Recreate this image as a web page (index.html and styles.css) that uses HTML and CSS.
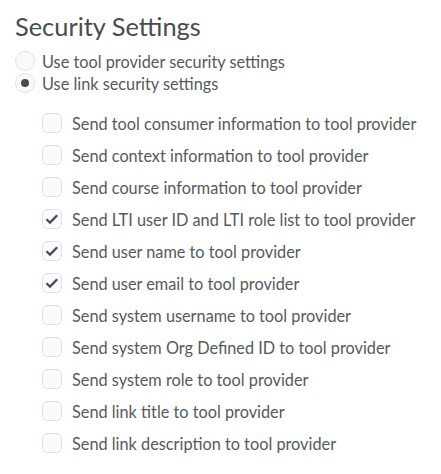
FILE: index.html
```html
<!DOCTYPE html>
<html lang="en">
<head>
    <meta charset="UTF-8">
    <meta name="viewport" content="width=device-width, initial-scale=1.0">
    <title>Security Settings</title>
    <link rel="stylesheet" href="styles.css">
</head>
<body>

    <section class="settings">
        <h2 class="title">Security Settings</h2>

        <div class="radio-group">
            <label class="radio-row"><span class="radio"></span> Use tool provider security settings</label>
            <label class="radio-row"><span class="radio checked"></span> Use link security settings</label>
        </div>

        <div class="check-group">
            <label class="check-row"><span class="box"></span> Send tool consumer information to tool provider</label>
            <label class="check-row"><span class="box"></span> Send context information to tool provider</label>
            <label class="check-row"><span class="box"></span> Send course information to tool provider</label>
            <label class="check-row"><span class="box checked"><svg viewBox="0 0 14 14"><path d="M1.5 7.2l3.5 3.4 7.2-7.4"/></svg></span> Send LTI user ID and LTI role list to tool provider</label>
            <label class="check-row"><span class="box checked"><svg viewBox="0 0 14 14"><path d="M1.5 7.2l3.5 3.4 7.2-7.4"/></svg></span> Send user name to tool provider</label>
            <label class="check-row"><span class="box checked"><svg viewBox="0 0 14 14"><path d="M1.5 7.2l3.5 3.4 7.2-7.4"/></svg></span> Send user email to tool provider</label>
            <label class="check-row"><span class="box"></span> Send system username to tool provider</label>
            <label class="check-row"><span class="box"></span> Send system Org Defined ID to tool provider</label>
            <label class="check-row"><span class="box"></span> Send system role to tool provider</label>
            <label class="check-row"><span class="box"></span> Send link title to tool provider</label>
            <label class="check-row"><span class="box"></span> Send link description to tool provider</label>
        </div>
    </section>

</body>
</html>
```

FILE: styles.css
```css
body {
    margin: 0;
    padding: 0;
    background-color: #fff;
    font-family: 'Lato', 'Liberation Sans', sans-serif;
    color: #565a5c;
}

.settings {
    padding: 10px 0 0 15px;
}

.title {
    margin: 0 0 8px 0;
    font-size: 25.4px;
    font-weight: normal;
    color: #494c4e;
    line-height: 32px;
}

.radio-group {
    display: flex;
    flex-direction: column;
}

.radio-row {
    display: flex;
    align-items: center;
    gap: 7px;
    height: 22px;
    font-size: 16.3px;
}

/* radio personalizado */
.radio {
    width: 20px;
    height: 20px;
    box-sizing: border-box;
    border-radius: 50%;
    border: 1px solid #dfe3e9;
    background-color: #f9fafb;
    position: relative;
    flex-shrink: 0;
}

.radio.checked:after {
    content: "";
    position: absolute;
    left: 5px;
    top: 5px;
    width: 8px;
    height: 8px;
    border-radius: 50%;
    background-color: #494c4e;
}

.check-group {
    display: flex;
    flex-direction: column;
    padding: 13px 0 0 27px;
}

.check-row {
    display: flex;
    align-items: center;
    gap: 10px;
    height: 32px;
    font-size: 16.3px;
}

/* checkbox personalizado */
.box {
    width: 20px;
    height: 20px;
    box-sizing: border-box;
    border: 1px solid #dfe3e9;
    border-radius: 5px;
    background-color: #f9fafb;
    flex-shrink: 0;
    display: flex;
    align-items: center;
    justify-content: center;
}

.box svg {
    width: 14px;
    height: 14px;
    fill: none;
    stroke: #494c4e;
    stroke-width: 2.3;
}
```
